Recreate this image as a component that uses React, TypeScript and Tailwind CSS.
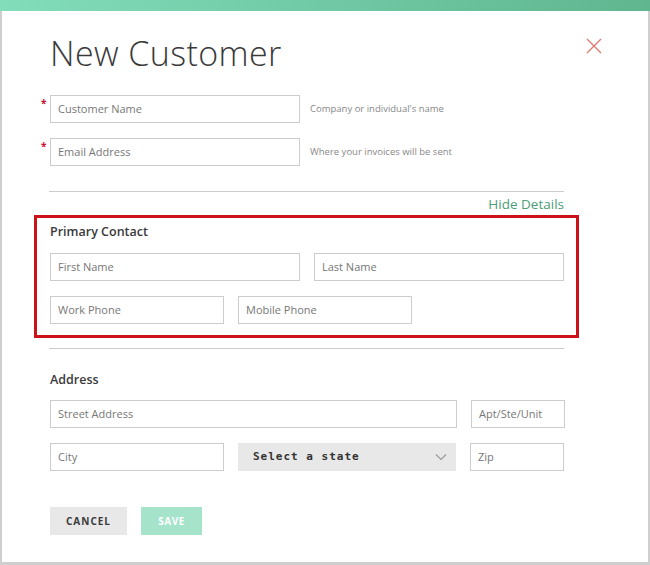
import React from "react";

const font = { fontFamily: '"Open Sans", "Liberation Sans", sans-serif' };

function Field({ ph, w }: { ph: string; w: string }) {
  return (
    <div
      className={`h-[28px] border border-[#cccccc] bg-white flex items-center pl-[7px] text-[11px] text-[#777777] shrink-0 ${w}`}
    >
      {ph}
    </div>
  );
}

export default function App() {
  return (
    <div className="w-[650px] h-[565px] bg-white overflow-hidden" style={font}>
      <div className="h-[565px] border-l-2 border-r-2 border-b-[3px] border-[#cfcfcf] flex flex-col relative">
        <div className="h-[11px] -mx-[2px] bg-gradient-to-r from-[#82ddbb] to-[#5fb68f]" />
        <div className="pl-[48px] pt-[22px] flex items-start">
          <div className="text-[34px] leading-[40px] font-light text-[#3a3a3a] tracking-[0.4px]">
            New Customer
          </div>
          <svg
            className="ml-auto mr-[46px] mt-[5px]"
            width="16"
            height="16"
            viewBox="0 0 16 16"
          >
            <path d="M1 1 L15 15 M15 1 L1 15" stroke="#de7b70" strokeWidth="1.4" fill="none" />
          </svg>
        </div>
        <div className="pl-[48px] w-[562px] flex flex-col">
          <div className="mt-[22px] flex items-center relative">
            <span className="absolute left-[-9px] top-[3px] text-[#c8102e] text-[10px] leading-[10px] font-bold">*</span>
            <Field ph="Customer Name" w="w-[250px]" />
            <span className="ml-[10px] text-[9.5px] text-[#888888]">Company or individual's name</span>
          </div>
          <div className="mt-[15px] flex items-center relative">
            <span className="absolute left-[-9px] top-[3px] text-[#c8102e] text-[10px] leading-[10px] font-bold">*</span>
            <Field ph="Email Address" w="w-[250px]" />
            <span className="ml-[10px] text-[9.5px] text-[#888888]">Where your invoices will be sent</span>
          </div>
          <div className="mt-[25px] -ml-px h-px bg-[#cccccc]" />
          <div className="mt-[4px] text-right text-[13.5px] leading-[16px] text-[#4b9c78]">Hide Details</div>
          <div className="mt-[3px] -ml-[16px] -mr-[15px] border-[3px] border-[#cc1219] pl-[13px] pr-[12px] pt-[6px] pb-[11px] flex flex-col">
            <div className="text-[12.5px] leading-[16px] font-semibold text-[#3a3a3a]">Primary Contact</div>
            <div className="mt-[13px] flex gap-[14px]">
              <Field ph="First Name" w="w-[250px]" />
              <Field ph="Last Name" w="w-[250px]" />
            </div>
            <div className="mt-[15px] flex gap-[14px]">
              <Field ph="Work Phone" w="w-[174px]" />
              <Field ph="Mobile Phone" w="w-[174px]" />
            </div>
          </div>
          <div className="mt-[10px] -ml-px h-px bg-[#cccccc]" />
          <div className="mt-[23px] text-[12.5px] leading-[16px] font-semibold text-[#3a3a3a]">Address</div>
          <div className="mt-[12px] flex gap-[14px]">
            <Field ph="Street Address" w="w-[407px]" />
            <Field ph="Apt/Ste/Unit" w="w-[94px]" />
          </div>
          <div className="mt-[15px] flex gap-[14px]">
            <Field ph="City" w="w-[174px]" />
            <div className="w-[220px] h-[28px] bg-[#e8e8e8] flex items-center pl-[15px] pr-[9px]">
              <span
                className="text-[11px] font-bold text-[#333333] tracking-[1px]"
                style={{ fontFamily: '"DejaVu Sans Mono", monospace' }}
              >
                Select a state
              </span>
              <svg className="ml-auto" width="12" height="8" viewBox="0 0 12 8">
                <path d="M1 1.5 L6 6.5 L11 1.5" stroke="#999999" strokeWidth="1.1" fill="none" />
              </svg>
            </div>
            <Field ph="Zip" w="w-[94px]" />
          </div>
          <div className="mt-[36px] flex gap-[14px]">
            <div className="w-[77px] h-[28px] bg-[#e8e8e8] flex items-center justify-center text-[10px] font-bold tracking-[1px] text-[#3a3a3a]">
              CANCEL
            </div>
            <div className="w-[61px] h-[28px] bg-[#a5e3cb] flex items-center justify-center text-[10px] font-bold tracking-[0.5px] text-white">
              SAVE
            </div>
          </div>
        </div>
      </div>
    </div>
  );
}
